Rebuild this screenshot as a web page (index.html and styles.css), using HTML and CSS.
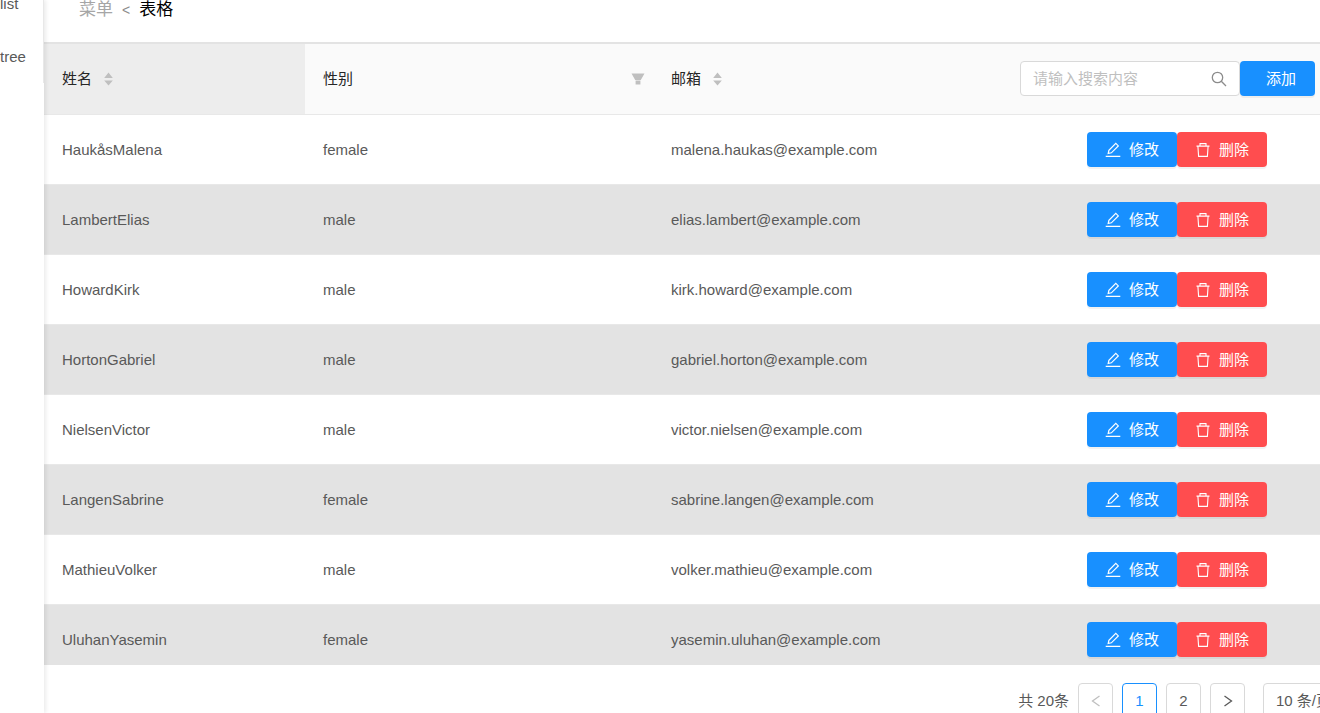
FILE: index.html
```html
<!DOCTYPE html>
<html lang="zh-CN">
<head>
    <meta charset="UTF-8">
    <meta name="viewport" content="width=device-width, initial-scale=1.0">
    <title>表格</title>
    <link rel="stylesheet" href="styles.css">
</head>
<body>

    <!-- shared icons -->
    <svg class="icon-defs" aria-hidden="true">
        <symbol id="icon-sort" viewBox="0 0 9 14">
            <path d="M4.5 0.5 L8.8 6 H0.2 Z M0.2 8.5 H8.8 L4.5 13.5 Z" fill="currentColor"/>
        </symbol>
        <symbol id="icon-filter" viewBox="0 0 14 12">
            <path d="M0.5 0.5 H13.5 L9.8 7 H4.2 Z M4.6 7.6 H9.4 V11.5 H4.6 Z" fill="currentColor"/>
        </symbol>
        <symbol id="icon-search" viewBox="0 0 16 16">
            <g fill="none" stroke="currentColor" stroke-width="1.3">
                <circle cx="6.5" cy="6.5" r="5.2"/>
                <path d="M10.3 10.3 L15 15"/>
            </g>
        </symbol>
        <symbol id="icon-edit" viewBox="0 0 16 16">
            <g fill="none" stroke="currentColor" stroke-width="1.2">
                <path d="M3.2 11.4 L3.9 8.3 L10.8 1.4 L13.3 3.9 L6.4 10.8 Z M0.7 14.4 H15.3"/>
            </g>
        </symbol>
        <symbol id="icon-delete" viewBox="0 0 16 16">
            <g fill="none" stroke="currentColor" stroke-width="1.1">
                <path d="M1.5 4.1 H14.5 M5 4 V1.6 H11 V4 M2.9 4.2 L3.6 14.4 H12.4 L13.1 4.2"/>
            </g>
        </symbol>
    </svg>

    <aside class="sidebar">
        <nav class="menu">
            <a href="#">list</a>
            <a href="#">tree</a>
        </nav>
    </aside>

    <main class="main">
        <div class="breadcrumb">
            <a href="#">菜单</a>
            <span class="separator">&lt;</span>
            <span>表格</span>
        </div>

        <div class="table-wrap">
            <table>
                <thead>
                    <tr>
                        <th class="col-name sorted">姓名<svg class="sort"><use href="#icon-sort"/></svg></th>
                        <th class="col-gender">
                            <div class="filter-head">性别<svg class="filter"><use href="#icon-filter"/></svg></div>
                        </th>
                        <th class="col-email">邮箱<svg class="sort"><use href="#icon-sort"/></svg></th>
                        <th class="col-action">
                            <div class="toolbar">
                                <label class="search">
                                    <input type="text" placeholder="请输入搜索内容" aria-label="搜索">
                                    <svg><use href="#icon-search"/></svg>
                                </label>
                                <button class="btn btn-primary btn-add" type="button">添加</button>
                            </div>
                        </th>
                    </tr>
                </thead>
                <tbody id="rows"></tbody>
            </table>
        </div>

        <div class="pagination">
            <span class="total">共 20条</span>
            <button class="page disabled" type="button" aria-label="上一页" disabled>
                <svg viewBox="0 0 10 12"><path d="M8.5 1 L1.5 6 L8.5 11"/></svg>
            </button>
            <button class="page active" type="button">1</button>
            <button class="page" type="button">2</button>
            <button class="page" type="button" aria-label="下一页">
                <svg viewBox="0 0 10 12"><path d="M1.5 1 L8.5 6 L1.5 11"/></svg>
            </button>
            <select class="page-size" aria-label="每页条数">
                <option>10 条/页</option>
                <option>20 条/页</option>
            </select>
        </div>
    </main>

    <script src="script.js"></script>
</body>
</html>
```
FILE: styles.css
```css
* {
    box-sizing: border-box;
}
body {
    margin: 0;
    display: flex;
    height: 100vh;
    overflow: hidden;
    font-family: "Liberation Sans", "Noto Sans CJK SC", sans-serif;
    font-size: 15px;
    line-height: 24px;
    color: #595959;
    background: #fff;
}
button,
input,
select {
    font: inherit;
}
.icon-defs {
    position: absolute;
    width: 0;
    height: 0;
}

/* sidebar */
.sidebar {
    flex: 0 0 44px;
    position: relative;
    z-index: 1;
    background: #fff;
    box-shadow: 2px 0 4px rgba(0, 0, 0, 0.08);
}
.menu {
    display: flex;
    flex-direction: column;
    gap: 29px;
    height: 83px;
    overflow: hidden;
    justify-content: flex-end;
    padding-bottom: 14px;
    border-right: 1px solid #e8e8e8;
}
.menu a {
    flex: none;
    color: #595959;
    text-decoration: none;
}

/* content */
.main {
    flex: 1;
    min-width: 0;
    display: flex;
    flex-direction: column;
}
.breadcrumb {
    flex: none;
    display: flex;
    gap: 9px;
    padding: 0 35px 22px;
    border-bottom: 2px solid #e3e3e3;
    font-size: 17px;
    line-height: 20px;
    color: #000;
}
.breadcrumb a {
    color: #a6a6a6;
    text-decoration: none;
}
.separator {
    font-size: 14px;
    color: #8c8c8c;
}
.table-wrap {
    flex: 1;
    min-height: 0;
    overflow: hidden;
}

/* the table runs a little past the right edge */
table {
    width: calc(100% + 32px);
    table-layout: fixed;
    border-collapse: separate;
    border-spacing: 0;
}
th,
td {
    padding: 17px 18px;
    border-bottom: 1px solid #e8e8e8;
    text-align: left;
}
th {
    height: 71px;
    background: #fafafa;
    color: #262626;
    font-weight: 400;
}
th.sorted {
    background: #ededed;
}
.col-name {
    width: 261px;
}
.col-email {
    width: 349px;
}
.col-action {
    width: 350px;
    vertical-align: top;
}
tbody tr:nth-child(even) {
    background: #e3e3e3;
}
.sort {
    width: 9px;
    height: 14px;
    margin-left: 12px;
    vertical-align: -2px;
    color: #bfbfbf;
}
.filter-head {
    display: flex;
    align-items: center;
    justify-content: space-between;
    margin-right: -10px;
}
.filter {
    width: 14px;
    height: 12px;
    color: #bfbfbf;
}
.toolbar {
    display: flex;
}
.search {
    display: flex;
    align-items: center;
    width: 220px;
    height: 35px;
    padding: 0 12px;
    border: 1px solid #d9d9d9;
    border-radius: 4px;
    background: #fff;
}
.search input {
    flex: 1;
    min-width: 0;
    padding: 0;
    border: 0;
    outline: 0;
    background: none;
}
.search input::placeholder {
    color: #bfbfbf;
}
.search svg {
    width: 16px;
    height: 16px;
    color: #8c8c8c;
}

/* buttons */
.btn {
    display: inline-flex;
    align-items: center;
    justify-content: center;
    gap: 8px;
    width: 90px;
    height: 35px;
    padding: 0;
    border: 0;
    border-radius: 4px;
    color: #fff;
    box-shadow: 0 2px 0 rgba(0, 0, 0, 0.05);
}
.btn svg {
    width: 16px;
    height: 16px;
}
.btn-primary {
    background: #1890ff;
}
.btn-danger {
    background: #ff4d4f;
}
.btn-add {
    width: 75px;
    padding-left: 7px;
}
.actions {
    display: flex;
    justify-content: center;
}

/* pagination */
.pagination {
    flex: 0 0 48px;
    display: flex;
    gap: 9px;
    justify-content: flex-end;
    align-items: flex-start;
    padding-top: 18px;
    margin-right: -60px;
    overflow: hidden;
}
.total {
    line-height: 35px;
}
.page {
    width: 35px;
    height: 35px;
    padding: 0;
    border: 1px solid #d9d9d9;
    border-radius: 4px;
    background: #fff;
    color: #595959;
}
.page.active {
    border-color: #1890ff;
    color: #1890ff;
}
.page.disabled {
    color: #bfbfbf;
}
.page svg {
    width: 10px;
    height: 12px;
    fill: none;
    stroke: currentColor;
    stroke-width: 1.3;
    vertical-align: -1px;
}
.page-size {
    appearance: none;
    width: 117px;
    height: 35px;
    margin-left: 9px;
    padding: 0 12px;
    border: 1px solid #d9d9d9;
    border-radius: 4px;
    background: #fff;
    color: #595959;
}
```
FILE: script.js
```js
const users = [
    ["HaukåsMalena", "female", "malena.haukas@example.com"],
    ["LambertElias", "male", "elias.lambert@example.com"],
    ["HowardKirk", "male", "kirk.howard@example.com"],
    ["HortonGabriel", "male", "gabriel.horton@example.com"],
    ["NielsenVictor", "male", "victor.nielsen@example.com"],
    ["LangenSabrine", "female", "sabrine.langen@example.com"],
    ["MathieuVolker", "male", "volker.mathieu@example.com"],
    ["UluhanYasemin", "female", "yasemin.uluhan@example.com"]
];

const actions = `
    <div class="actions">
        <button class="btn btn-primary" type="button"><svg><use href="#icon-edit"/></svg>修改</button>
        <button class="btn btn-danger" type="button"><svg><use href="#icon-delete"/></svg>删除</button>
    </div>`;

document.getElementById("rows").innerHTML = users.map(([name, gender, email]) => `
    <tr>
        <td>${name}</td>
        <td>${gender}</td>
        <td>${email}</td>
        <td>${actions}</td>
    </tr>`).join("");
```
